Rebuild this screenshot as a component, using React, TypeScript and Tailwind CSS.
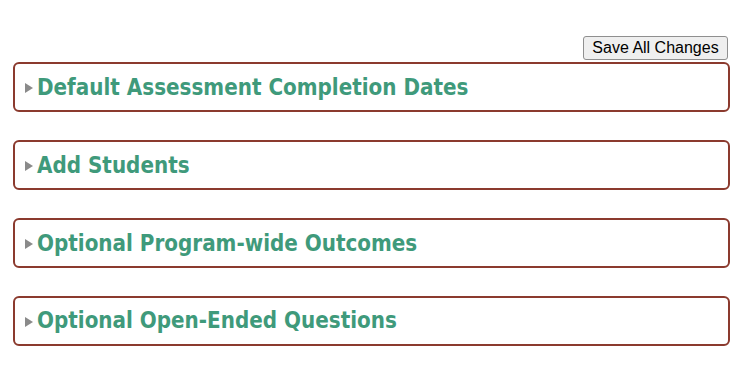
const sections = [
  "Default Assessment Completion Dates",
  "Add Students",
  "Optional Program-wide Outcomes",
  "Optional Open-Ended Questions",
];

export default function App() {
  return (
    <div className="w-[743px] h-[391px] bg-white pt-[36px] pl-[13px] pr-[13px]">
      <div className="flex justify-end pr-[2px]">
        <button className="h-[24px] w-[145px] text-[16px] leading-none text-black bg-[#efefef] border border-[#8f8f8f] rounded-[3px] font-['Liberation_Sans',Arial,sans-serif]">
          Save All Changes
        </button>
      </div>
      <div className="flex flex-col gap-[27.85px] mt-[2px]">
        {sections.map((title) => (
          <div
            key={title}
            className="h-[50px] border-2 border-[#8b3a2e] rounded-[6px] flex items-center pl-[10px]"
          >
            <span className="w-0 h-0 border-y-[5px] border-y-transparent border-l-[8px] border-l-[#8a8a8a] mr-[4px] mt-[2px]" />
            <h3 className="text-[22.2px] font-bold text-[#3f9a7b] font-['DejaVu_Sans_Condensed','DejaVu_Sans',Verdana,sans-serif] leading-none">
              {title}
            </h3>
          </div>
        ))}
      </div>
    </div>
  );
}
